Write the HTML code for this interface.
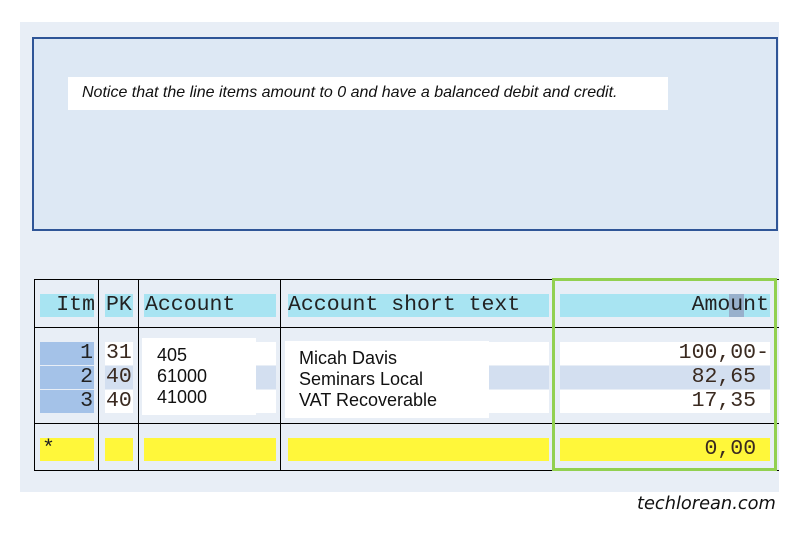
<!DOCTYPE html>
<html><head><meta charset="utf-8"><style>
*{margin:0;padding:0;box-sizing:border-box}
body{width:806px;height:541px;background:#fff;position:relative;overflow:hidden;font-family:"Liberation Sans",sans-serif}
div{position:absolute}
.m{font-family:"Liberation Mono",monospace;font-size:21.5px;color:#222;line-height:24px;white-space:pre}
.c{background:#a8e4f2}
.y{background:#fff73a}
.w{background:#fff}
.l{background:#d3dff0}
.b{background:#a4c2e8}
.s{font-size:18px;color:#111;line-height:21px}
</style></head><body>
<div style="left:20px;top:22px;width:759px;height:470px;background:#e8eef6"></div>
<div style="left:32px;top:37px;width:746px;height:194px;background:#dde8f4;border:2px solid #2f5597"></div>
<div style="left:68px;top:77px;width:600px;height:33px;background:#fff"></div>
<div style="left:82px;top:84px;font-size:16px;font-style:italic;color:#111;white-space:nowrap">Notice that the line items amount to 0 and have a balanced debit and credit.</div>

<div style="left:34px;top:279px;width:745px;height:1px;background:#000"></div>
<div style="left:34px;top:327px;width:745px;height:1px;background:#000"></div>
<div style="left:34px;top:423px;width:745px;height:1px;background:#000"></div>
<div style="left:34px;top:470px;width:745px;height:1px;background:#000"></div>
<div style="left:34px;top:279px;width:1px;height:192px;background:#000"></div>
<div style="left:98px;top:279px;width:1px;height:192px;background:#000"></div>
<div style="left:138px;top:279px;width:1px;height:192px;background:#000"></div>
<div style="left:280px;top:279px;width:1px;height:192px;background:#000"></div>

<div class="c" style="left:40px;top:294px;width:54px;height:23px"></div>
<div class="c" style="left:105px;top:294px;width:28px;height:23px"></div>
<div class="c" style="left:144px;top:294px;width:132px;height:23px"></div>
<div class="c" style="left:288px;top:294px;width:261px;height:23px"></div>
<div class="c" style="left:560px;top:294px;width:210px;height:23px"></div>
<div style="left:729px;top:294px;width:15px;height:23px;background:#98b0cc"></div>
<div class="m" style="left:40px;top:293px;width:55px;text-align:right">Itm</div>
<div class="m" style="left:106px;top:293px">PK</div>
<div class="m" style="left:145px;top:293px">Account</div>
<div class="m" style="left:288px;top:293px">Account short text</div>
<div class="m" style="left:560px;top:293px;width:209px;text-align:right">Amount</div>

<div class="b" style="left:40px;top:342px;width:54px;height:23px"></div>
<div class="b" style="left:40px;top:366px;width:54px;height:23px"></div>
<div class="b" style="left:40px;top:390px;width:54px;height:23px"></div>
<div class="m" style="left:40px;top:341px;width:53px;text-align:right">1
2
3</div>
<div class="w" style="left:105px;top:342px;width:28px;height:23px"></div>
<div class="l" style="left:105px;top:366px;width:28px;height:23px"></div>
<div class="w" style="left:105px;top:390px;width:28px;height:23px"></div>
<div class="m" style="left:106px;top:341px;color:#3a2a20">31
40
40</div>
<div class="w" style="left:144px;top:342px;width:132px;height:23px"></div>
<div class="l" style="left:144px;top:366px;width:132px;height:23px"></div>
<div class="w" style="left:144px;top:390px;width:132px;height:23px"></div>
<div class="w" style="left:142px;top:338px;width:114px;height:77px"></div>
<div class="s" style="left:157px;top:345px">405<br>61000<br>41000</div>
<div class="w" style="left:285px;top:342px;width:264px;height:23px"></div>
<div class="l" style="left:285px;top:366px;width:264px;height:23px"></div>
<div class="w" style="left:285px;top:390px;width:264px;height:23px"></div>
<div class="w" style="left:285px;top:341px;width:204px;height:77px"></div>
<div class="s" style="left:299px;top:348px">Micah Davis<br>Seminars Local<br>VAT Recoverable</div>
<div class="w" style="left:560px;top:342px;width:210px;height:23px"></div>
<div class="l" style="left:560px;top:366px;width:210px;height:23px"></div>
<div class="w" style="left:560px;top:390px;width:210px;height:23px"></div>
<div class="m" style="left:560px;top:341px;width:209px;text-align:right;color:#3a2a20">100,00-
82,65 
17,35 </div>

<div class="y" style="left:40px;top:438px;width:54px;height:23px"></div>
<div class="y" style="left:105px;top:438px;width:28px;height:23px"></div>
<div class="y" style="left:144px;top:438px;width:132px;height:23px"></div>
<div class="y" style="left:288px;top:438px;width:261px;height:23px"></div>
<div class="y" style="left:560px;top:438px;width:210px;height:23px"></div>
<div class="m" style="left:42px;top:437px">*</div>
<div class="m" style="left:560px;top:437px;width:209px;text-align:right;color:#3a2a20">0,00 </div>

<div style="left:552px;top:278px;width:225px;height:193px;border:3px solid #92d050"></div>

<div style="left:637px;top:493px;font-family:'DejaVu Sans',sans-serif;font-size:17.8px;font-style:italic;color:#111;white-space:nowrap">techlorean.com</div>
</body></html>
